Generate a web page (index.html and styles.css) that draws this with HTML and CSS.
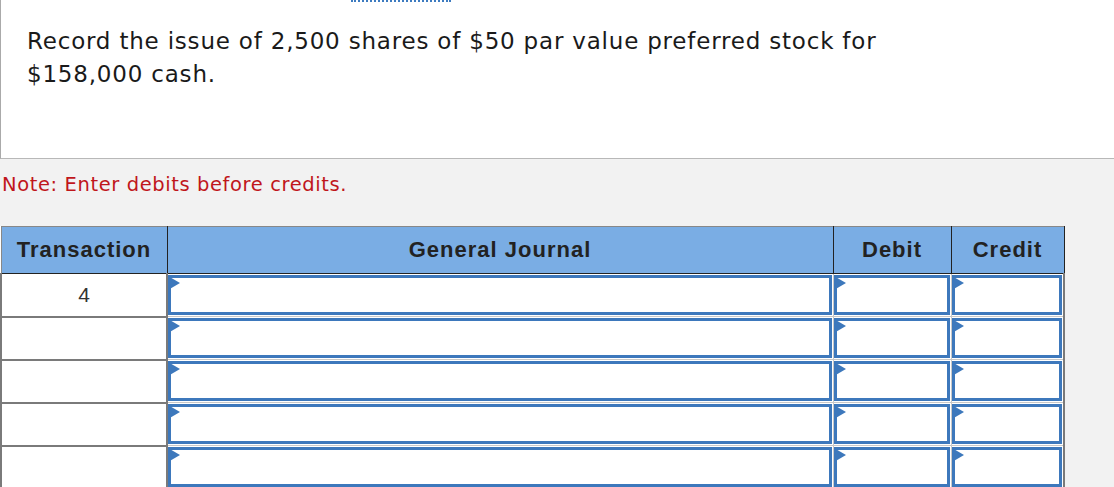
FILE: index.html
```html
<!DOCTYPE html>
<html>
<head>
<meta charset="utf-8">
<link rel="stylesheet" href="styles.css">
</head>
<body>
<div class="question">
  <div class="tab-mark"></div>
  <p class="prompt">Record the issue of 2,500 shares of $50 par value preferred stock for<br>$158,000 cash.</p>
</div>
<p class="note">Note: Enter debits before credits.</p>
<table class="journal">
  <thead>
    <tr>
      <th class="c-tr">Transaction</th>
      <th class="c-gj">General Journal</th>
      <th class="c-dr">Debit</th>
      <th class="c-cr">Credit</th>
    </tr>
  </thead>
  <tbody>
    <tr>
      <td class="tr-num">4</td>
      <td class="in"><div class="box"><span class="flag"></span></div></td>
      <td class="in"><div class="box"><span class="flag"></span></div></td>
      <td class="in"><div class="box"><span class="flag"></span></div></td>
    </tr>
    <tr>
      <td class="tr-num"></td>
      <td class="in"><div class="box"><span class="flag"></span></div></td>
      <td class="in"><div class="box"><span class="flag"></span></div></td>
      <td class="in"><div class="box"><span class="flag"></span></div></td>
    </tr>
    <tr>
      <td class="tr-num"></td>
      <td class="in"><div class="box"><span class="flag"></span></div></td>
      <td class="in"><div class="box"><span class="flag"></span></div></td>
      <td class="in"><div class="box"><span class="flag"></span></div></td>
    </tr>
    <tr>
      <td class="tr-num"></td>
      <td class="in"><div class="box"><span class="flag"></span></div></td>
      <td class="in"><div class="box"><span class="flag"></span></div></td>
      <td class="in"><div class="box"><span class="flag"></span></div></td>
    </tr>
    <tr>
      <td class="tr-num"></td>
      <td class="in"><div class="box"><span class="flag"></span></div></td>
      <td class="in"><div class="box"><span class="flag"></span></div></td>
      <td class="in"><div class="box"><span class="flag"></span></div></td>
    </tr>
  </tbody>
</table>
</body>
</html>
```
FILE: styles.css
```css
html, body {
  margin: 0;
  padding: 0;
  background: #f2f2f2;
}
body {
  font-family: "DejaVu Sans", Verdana, sans-serif;
  color: #1a1a1a;
}
.question {
  background: #fff;
  border-left: 1px solid #aaaaaa;
  border-bottom: 1px solid #b8b8b8;
  height: 159px;
  box-sizing: border-box;
}
.tab-mark {
  margin-left: 350px;
  width: 100px;
  height: 0;
  border-top: 2px dotted #3d7bc0;
}
.prompt {
  margin: 0;
  padding: 23px 0 0 26px;
  font-size: 23px;
  letter-spacing: 0.8px;
  line-height: 33px;
  color: #1a1a1a;
}
.note {
  margin: 0;
  padding: 14px 0 0 2px;
  height: 67px;
  box-sizing: border-box;
  font-size: 19.5px;
  letter-spacing: 0.6px;
  line-height: 24px;
  color: #c0161b;
}
.journal {
  border-collapse: collapse;
  width: 1065px;
  font-family: "Liberation Sans", Arial, sans-serif;
  background: #fff;
}
.journal th {
  background: #7aade4;
  color: #222;
  font-weight: bold;
  font-size: 22px;
  letter-spacing: 1px;
  height: 46px;
  padding: 0;
  border: 1px solid #222;
  border-top: 1px solid #888;
  text-align: center;
}
.journal th.c-tr { border-left: 1px solid #888; }
.c-tr { width: 165px; }
.c-gj { width: auto; }
.c-dr { width: 117px; }
.c-cr { width: 112px; }
.journal td {
  padding: 1px;
  border: 1px solid #c8c8c8;
  height: 43px;
  box-sizing: border-box;
}
.journal td.in { padding: 1px 1px 1px 0; }
.journal td.tr-num {
  border: 2px solid #7a7a7a;
  border-top: none;
  text-align: center;
  font-size: 21px;
  color: #333;
  padding: 0;
}
.journal tbody tr:first-child td { border-top: 1px solid #222; }
.journal td.in:last-child { border-right: 2px solid #7a7a7a; }
.journal td.in:nth-child(2) { border-left: 2px solid #7a7a7a; }
.box {
  position: relative;
  height: 40px;
  box-sizing: border-box;
  border: 3px solid #3d78bc;
  background: #fff;
}
.flag {
  position: absolute;
  left: -3px;
  top: -2px;
  width: 0;
  height: 0;
  border-left: 12px solid #3d78bc;
  border-top: 7px solid transparent;
  border-bottom: 7px solid transparent;
}
```
